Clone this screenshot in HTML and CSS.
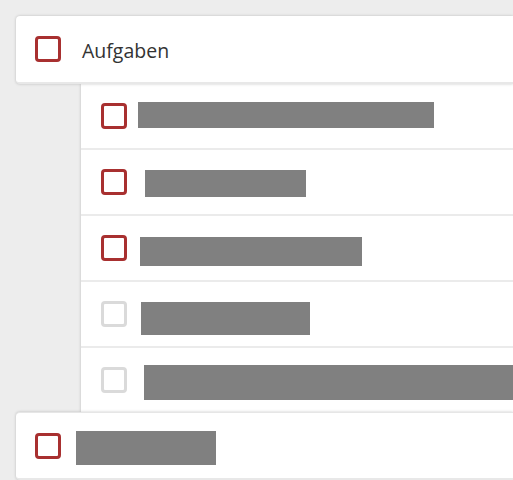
FILE: index.html
```html
<!DOCTYPE html>
<html lang="de">
<head>
<meta charset="utf-8">
<title>Aufgaben</title>
<link rel="stylesheet" href="styles.css">
</head>
<body>
<div class="list">
  <div class="card card-top">
    <span class="check check-red"></span>
    <span class="title">Aufgaben</span>
  </div>
  <div class="subtasks">
    <div class="row">
      <span class="check check-red"></span>
      <span class="redact" style="margin-left:11px;margin-top:18px;width:296px;height:26px"></span>
    </div>
    <div class="row">
      <span class="check check-red"></span>
      <span class="redact" style="margin-left:18px;margin-top:20px;width:161px;height:27px"></span>
    </div>
    <div class="row">
      <span class="check check-red"></span>
      <span class="redact" style="margin-left:13px;margin-top:21px;width:222px;height:29px"></span>
    </div>
    <div class="row">
      <span class="check check-grey"></span>
      <span class="redact" style="margin-left:14px;margin-top:20px;width:169px;height:33px"></span>
    </div>
    <div class="row row-last">
      <span class="check check-grey"></span>
      <span class="redact" style="margin-left:17px;margin-top:17px;width:369px;height:35px"></span>
    </div>
  </div>
  <div class="card card-bottom">
    <span class="check check-red"></span>
    <span class="redact" style="margin-left:15px;margin-top:18px;width:140px;height:34px"></span>
  </div>
</div>
</body>
</html>
```
FILE: styles.css
```css
html, body {
  margin: 0;
  padding: 0;
  background: #ededed;
  font-family: "Open Sans", "Noto Sans", sans-serif;
  overflow: hidden;
}
.list {
  padding-top: 16px;
  padding-left: 16px;
}
.card {
  position: relative;
  z-index: 2;
  background: #fff;
  border-radius: 4px 0 0 4px;
  box-shadow: 0 0 3px rgba(0, 0, 0, 0.22);
  display: flex;
  align-items: center;
  padding-left: 19px;
  box-sizing: border-box;
}
.card-top {
  height: 68px;
  border-bottom: 2px solid #e8e8e8;
}
.card-bottom {
  height: 68px;
  border-top: 1px solid #e6e6e6;
  border-bottom: 2px solid #e8e8e8;
  align-items: flex-start;
}
.card-bottom .check {
  margin-top: 20px;
}
.title {
  margin-left: 21px;
  font-size: 19.5px;
  color: #333;
  margin-top: 2px;
}
.subtasks {
  position: relative;
  z-index: 1;
  margin-left: 65px;
  background: #fff;
  box-shadow: 0 0 3px rgba(0, 0, 0, 0.2);
}
.row {
  height: 66px;
  box-sizing: border-box;
  border-bottom: 2px solid #ebebeb;
  display: flex;
  align-items: flex-start;
  padding-left: 20px;
  overflow: hidden;
}
.row .check {
  margin-top: 19px;
}
.row-last {
  height: 64px;
  border-bottom: none;
}
.check {
  flex: none;
  width: 26px;
  height: 26px;
  box-sizing: border-box;
  border-radius: 4px;
  background: #fff;
}
.check-red {
  border: 3px solid #a83030;
}
.check-grey {
  border: 3px solid #dadada;
}
.redact {
  flex: none;
  display: block;
  background: #808080;
}
```
